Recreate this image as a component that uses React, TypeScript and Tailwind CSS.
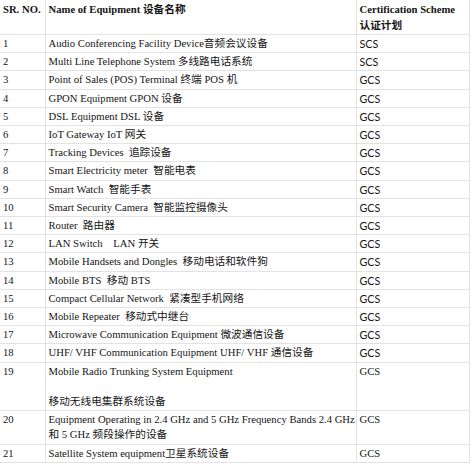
import React from "react"

type Row = {
  no: number
  name: React.ReactNode
  scheme: string
  sans?: boolean
}

const rows: Row[] = [
  { no: 1, name: "Audio Conferencing Facility Device音频会议设备", scheme: "SCS", sans: true },
  { no: 2, name: "Multi Line Telephone System 多线路电话系统", scheme: "SCS", sans: true },
  { no: 3, name: "Point of Sales (POS) Terminal 终端 POS 机", scheme: "GCS", sans: true },
  { no: 4, name: "GPON Equipment GPON 设备", scheme: "GCS", sans: true },
  { no: 5, name: "DSL Equipment DSL 设备", scheme: "GCS", sans: true },
  { no: 6, name: "IoT Gateway IoT 网关", scheme: "GCS", sans: true },
  { no: 7, name: "Tracking Devices  追踪设备", scheme: "GCS", sans: true },
  { no: 8, name: "Smart Electricity meter  智能电表", scheme: "GCS", sans: true },
  { no: 9, name: "Smart Watch  智能手表", scheme: "GCS", sans: true },
  { no: 10, name: "Smart Security Camera  智能监控摄像头", scheme: "GCS", sans: true },
  { no: 11, name: "Router  路由器", scheme: "GCS", sans: true },
  { no: 12, name: "LAN Switch    LAN 开关", scheme: "GCS", sans: true },
  { no: 13, name: "Mobile Handsets and Dongles  移动电话和软件狗", scheme: "GCS", sans: true },
  { no: 14, name: "Mobile BTS  移动 BTS", scheme: "GCS", sans: true },
  { no: 15, name: "Compact Cellular Network  紧凑型手机网络", scheme: "GCS", sans: true },
  { no: 16, name: "Mobile Repeater  移动式中继台", scheme: "GCS", sans: true },
  { no: 17, name: "Microwave Communication Equipment 微波通信设备", scheme: "GCS", sans: true },
  { no: 18, name: "UHF/ VHF Communication Equipment UHF/ VHF 通信设备", scheme: "GCS", sans: true },
  {
    no: 19,
    name: (
      <>
        Mobile Radio Trunking System Equipment
        <br />
        <br />
        移动无线电集群系统设备
      </>
    ),
    scheme: "GCS",
  },
  {
    no: 20,
    name: (
      <>
        <span className="whitespace-nowrap">Equipment Operating in 2.4 GHz and 5 GHz Frequency Bands 2.4 GHz</span>
        <br />
        和 5 GHz 频段操作的设备
      </>
    ),
    scheme: "GCS",
  },
  { no: 21, name: "Satellite System equipment卫星系统设备", scheme: "GCS" },
]

const serif = "font-['Liberation_Serif','Noto_Sans_CJK_SC',serif]"
const sans = "font-['Lato','Noto_Sans_CJK_SC',sans-serif]"

export default function App() {
  return (
    <div className="min-h-screen bg-white text-[#151515]">
      <table className={`w-[469px] table-fixed border-collapse text-[10.67px] ${serif}`}>
        <colgroup>
          <col className="w-[45px]" />
          <col className="w-[311px]" />
          <col className="w-[113px]" />
        </colgroup>
        <thead>
          <tr className="align-top font-bold leading-[16px]">
            <th className="whitespace-nowrap border-b border-[#e3e3e3] px-[3px] py-px text-left">SR. NO.</th>
            <th className="border border-t-0 border-[#e3e3e3] px-[3px] py-px text-left">Name of Equipment 设备名称</th>
            <th className="border border-t-0 border-[#e3e3e3] px-[3px] py-px text-left">
              Certification Scheme
              <br />
              认证计划
            </th>
          </tr>
        </thead>
        <tbody>
          {rows.map((row) => (
            <tr key={row.no} className="align-top leading-[15.2px]">
              <td className="border-b border-[#e3e3e3] px-[3px] py-px">{row.no}</td>
              <td className="whitespace-pre-wrap border border-[#e3e3e3] px-[3px] py-px">{row.name}</td>
              <td className={`border border-[#e3e3e3] px-[3px] py-px ${row.sans ? sans : ""}`}>{row.scheme}</td>
            </tr>
          ))}
        </tbody>
      </table>
    </div>
  )
}
